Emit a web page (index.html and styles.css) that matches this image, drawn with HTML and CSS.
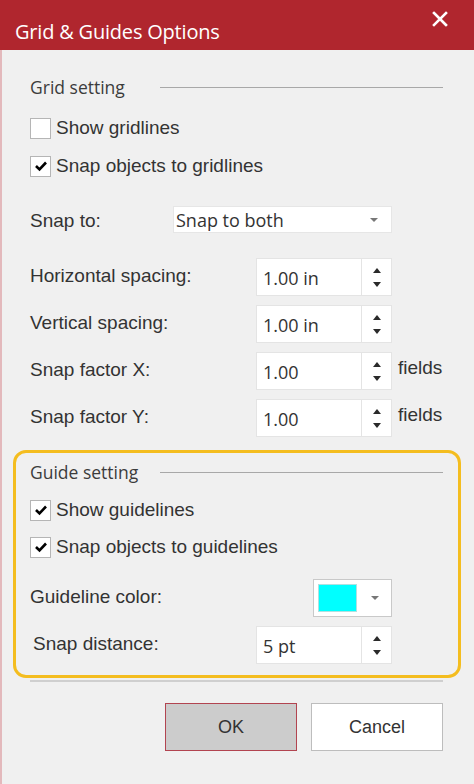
FILE: index.html
```html
<!DOCTYPE html>
<html>
<head>
<meta charset="utf-8">
<link rel="stylesheet" href="styles.css">
</head>
<body>
<div class="dialog">
  <header class="titlebar">
    <span class="title">Grid &amp; Guides Options</span>
    <svg class="close" width="16" height="16" viewBox="0 0 16 16"><path d="M2 2 L14 14 M14 2 L2 14" stroke="#fff" stroke-width="2.6" stroke-linecap="square"/></svg>
  </header>
  <main class="content">
    <div class="section-head first"><span>Grid setting</span><i class="rule"></i></div>
    <label class="check r1"><span class="box"></span><span>Show gridlines</span></label>
    <label class="check r2"><span class="box"><svg width="14" height="12" viewBox="0 0 14 12"><path d="M2 6 L5.5 9.5 L12 2.5" fill="none" stroke="#000" stroke-width="2.6"/></svg></span><span>Snap objects to gridlines</span></label>

    <div class="row snapto"><span class="lbl short">Snap to:</span><div class="select"><span>Snap to both</span><i class="caret"></i></div></div>

    <div class="row spin-row first-spin"><span class="lbl">Horizontal spacing:</span><div class="spin"><span class="val">1.00 in</span><span class="arrows"><i class="up"></i><i class="down"></i></span></div></div>
    <div class="row spin-row"><span class="lbl">Vertical spacing:</span><div class="spin"><span class="val">1.00 in</span><span class="arrows"><i class="up"></i><i class="down"></i></span></div></div>
    <div class="row spin-row"><span class="lbl">Snap factor X:</span><div class="spin"><span class="val">1.00</span><span class="arrows"><i class="up"></i><i class="down"></i></span></div><span class="unit">fields</span></div>
    <div class="row spin-row"><span class="lbl">Snap factor Y:</span><div class="spin"><span class="val">1.00</span><span class="arrows"><i class="up"></i><i class="down"></i></span></div><span class="unit">fields</span></div>

    <section class="guide">
      <div class="section-head"><span>Guide setting</span><i class="rule"></i></div>
      <label class="check g1"><span class="box"><svg width="14" height="12" viewBox="0 0 14 12"><path d="M2 6 L5.5 9.5 L12 2.5" fill="none" stroke="#000" stroke-width="2.6"/></svg></span><span>Show guidelines</span></label>
      <label class="check g2"><span class="box"><svg width="14" height="12" viewBox="0 0 14 12"><path d="M2 6 L5.5 9.5 L12 2.5" fill="none" stroke="#000" stroke-width="2.6"/></svg></span><span>Snap objects to guidelines</span></label>
      <div class="row color-row"><span class="lbl">Guideline color:</span><div class="colorpick"><span class="swatch"></span><i class="caret"></i></div></div>
      <div class="row spin-row dist-row"><span class="lbl indent">Snap distance:</span><div class="spin"><span class="val">5 pt</span><span class="arrows"><i class="up"></i><i class="down"></i></span></div></div>
    </section>

    <hr class="sep">
    <div class="buttons">
      <button class="btn ok">OK</button>
      <button class="btn cancel">Cancel</button>
    </div>
  </main>
</div>
</body>
</html>
```
FILE: styles.css
```css
html, body {
  margin: 0;
  padding: 0;
}
body {
  width: 474px;
  height: 784px;
  overflow: hidden;
  background: #f0f0f0;
  font-family: "Liberation Sans", Arial, sans-serif;
  color: #333;
}
.dialog {
  height: 784px;
  border-left: 2px solid #e3b9bc;
  box-sizing: border-box;
}
.titlebar {
  height: 50px;
  margin-left: -2px;
  background: #b0262e;
  display: flex;
  align-items: center;
  justify-content: space-between;
  padding: 0 26px 0 15px;
  box-sizing: border-box;
}
.title {
  font-family: "Open Sans", "Noto Sans", sans-serif;
  font-size: 20px;
  color: #fff;
  letter-spacing: -0.2px;
  margin-top: 12px;
}
.close {
  margin-top: -12px;
}
.content {
  padding: 0 31px 0 28px;
}
.section-head {
  display: flex;
  align-items: center;
  height: 26px;
  font-family: "Open Sans", "Noto Sans", sans-serif;
  font-size: 17.5px;
  color: #3c3c3c;
}
.section-head.first {
  margin-top: 24px;
}
.section-head span {
  width: 130px;
}
.rule {
  flex: 1;
  height: 1px;
  background: #a8a8a8;
}
.check {
  display: flex;
  align-items: center;
  height: 22px;
  font-size: 19px;
  color: #333;
}
.check .box {
  width: 19px;
  height: 19px;
  background: #fff;
  border: 1px solid #b5b5b5;
  margin-right: 5px;
  display: flex;
  align-items: center;
  justify-content: center;
}
.check.r1 { margin-top: 17px; }
.check.r2 { margin-top: 16px; }
.row {
  display: flex;
  align-items: center;
  font-size: 19px;
}
.lbl {
  width: 226px;
  flex: none;
  color: #333;
  margin-top: -3px;
}
.lbl.short {
  width: 143px;
  margin-top: 2px;
}
.lbl.indent {
  padding-left: 3px;
  box-sizing: border-box;
}
.snapto {
  margin-top: 29px;
  height: 27px;
}
.select {
  width: 219px;
  height: 27px;
  background: #fff;
  border: 1px solid #e6e6e6;
  box-sizing: border-box;
  display: flex;
  align-items: center;
  justify-content: space-between;
  padding: 0 13px 0 2px;
  font-family: "Open Sans", "Noto Sans", sans-serif;
  font-size: 18px;
  color: #333;
}
.caret {
  width: 0;
  height: 0;
  border-left: 4px solid transparent;
  border-right: 4px solid transparent;
  border-top: 4px solid #777;
}
.spin-row {
  height: 38px;
  margin-top: 9px;
}
.spin-row.first-spin {
  margin-top: 25px;
}
.spin {
  width: 136px;
  height: 38px;
  background: #fff;
  border: 1px solid #e4e4e4;
  box-sizing: border-box;
  display: flex;
}
.val {
  flex: 1;
  display: flex;
  align-items: center;
  padding-left: 6px;
  padding-top: 2px;
  font-family: "Open Sans", "Noto Sans", sans-serif;
  font-size: 18px;
  color: #333;
  border-right: 1px solid #e4e4e4;
}
.arrows {
  width: 29px;
  display: flex;
  flex-direction: column;
  align-items: center;
  justify-content: center;
  gap: 9px;
}
.arrows .up {
  width: 0;
  height: 0;
  border-left: 4px solid transparent;
  border-right: 4px solid transparent;
  border-bottom: 5px solid #2a2a2a;
}
.arrows .down {
  width: 0;
  height: 0;
  border-left: 4px solid transparent;
  border-right: 4px solid transparent;
  border-top: 5px solid #2a2a2a;
}
.unit {
  margin-left: 6px;
  margin-top: -7px;
}
.guide {
  margin: 13px -18px 0 -17px;
  height: 228px;
  border: 3px solid #f4bd1f;
  border-radius: 13px;
  box-sizing: border-box;
  padding: 6px 15px 0 14px;
}
.guide .section-head span {
  width: 130px;
}
.check.g1 { margin-top: 14px; }
.check.g2 { margin-top: 15px; }
.color-row {
  margin-top: 21px;
  height: 38px;
}
.color-row .lbl {
  width: 283px;
}
.colorpick {
  width: 79px;
  height: 38px;
  background: #fff;
  border: 1px solid #c9c9c9;
  box-sizing: border-box;
  display: flex;
  align-items: center;
  padding-left: 4px;
}
.swatch {
  width: 39px;
  height: 28px;
  background: #00ffff;
  border: 1px solid #b0e0e0;
  box-sizing: border-box;
  margin-right: 14px;
}
.dist-row {
  margin-top: 9px;
}
.sep {
  margin: 2px 0 0 0;
  border: none;
  border-top: 2px solid #cfcfcf;
  height: 0;
}
.buttons {
  display: flex;
  justify-content: flex-end;
  gap: 14px;
  margin-top: 21px;
}
.btn {
  width: 132px;
  height: 48px;
  font-family: "Liberation Sans", Arial, sans-serif;
  font-size: 18px;
  color: #333;
  box-sizing: border-box;
  padding: 0;
}
.ok {
  background: #cccccc;
  border: 1px solid #b24450;
}
.cancel {
  background: #fff;
  border: 1px solid #bdbdbd;
}
```
